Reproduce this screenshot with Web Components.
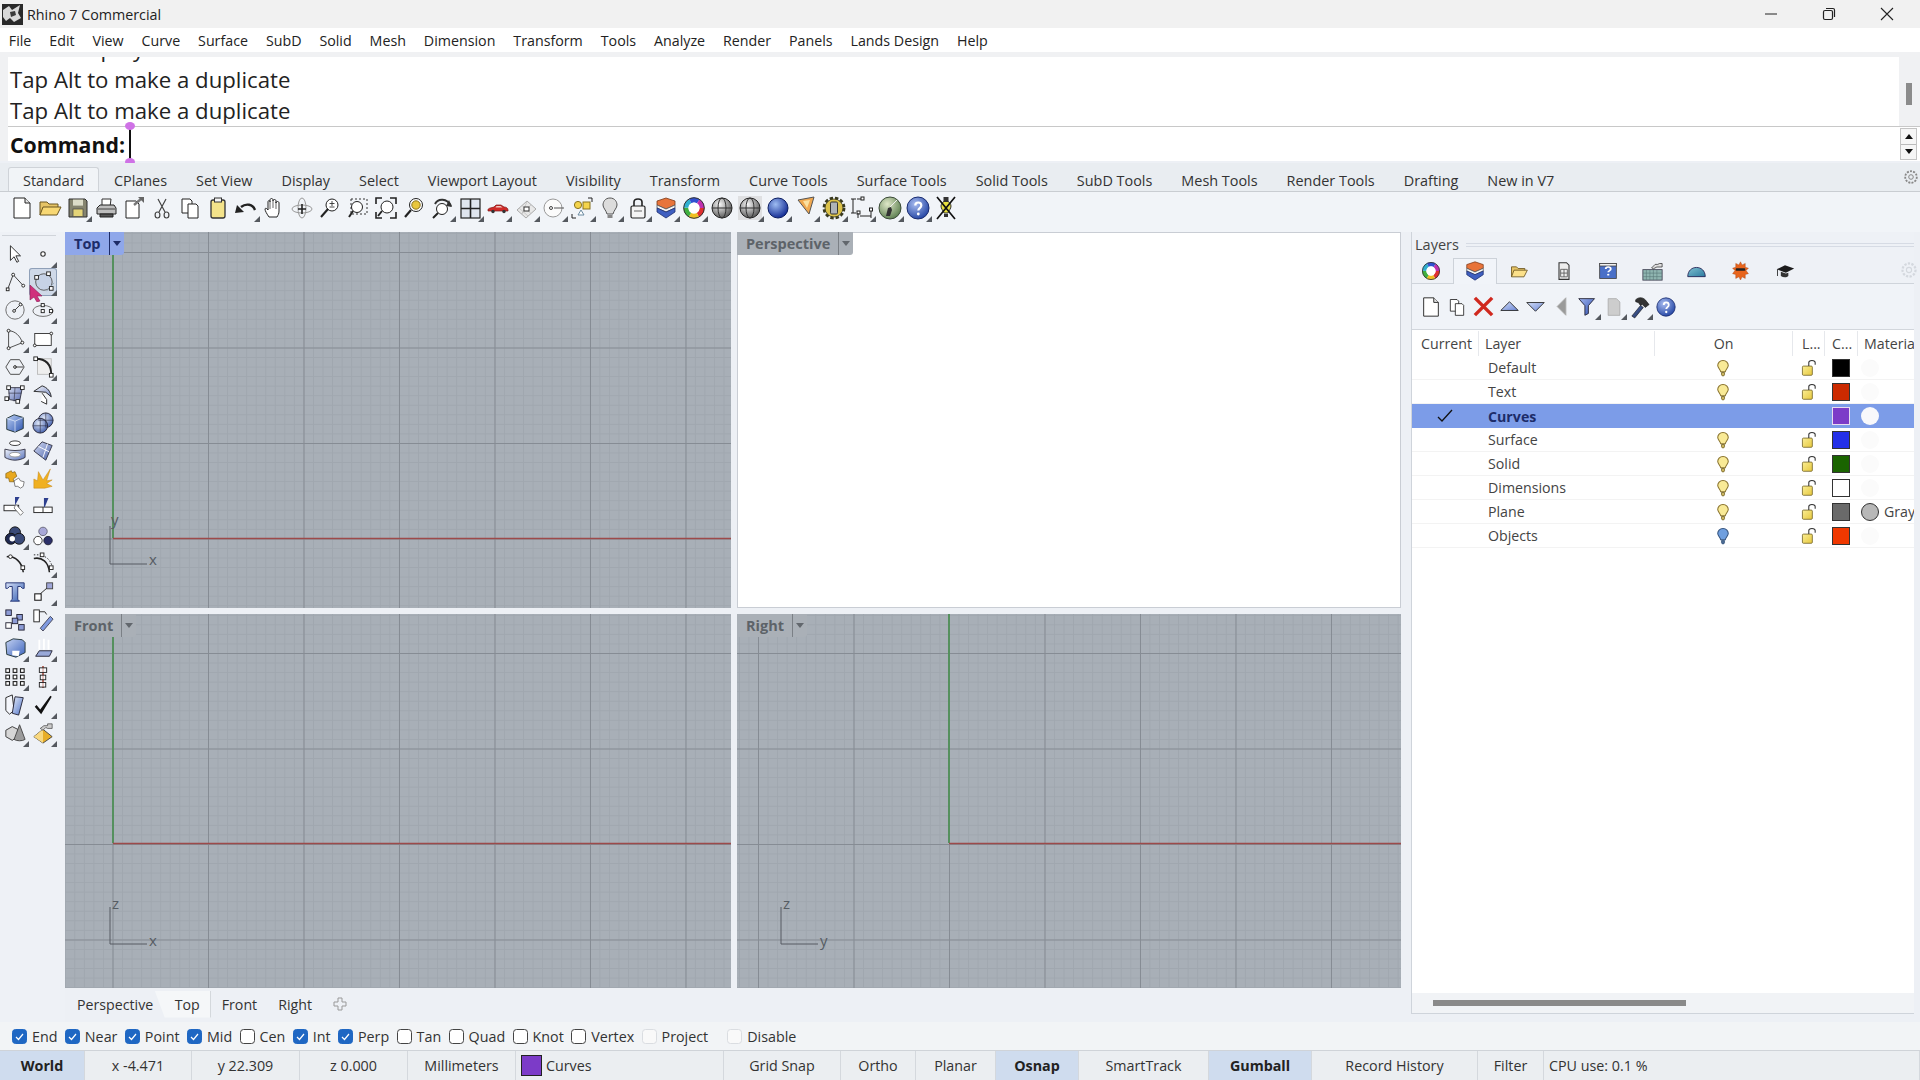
<![CDATA[<!DOCTYPE html>
<html lang="en"><head><meta charset="utf-8"><title>Rhino 7 Commercial</title>
<style>
html,body{margin:0;padding:0;width:1920px;height:1080px;overflow:hidden;background:#edf0f5;font-family:"Open Sans","Noto Sans",sans-serif;color:#333}
</style></head><body>
<rh-app></rh-app>
<script>
const G=(id,a,b)=>`<defs><linearGradient id="${id}" x1="0" y1="0" x2="1" y2="1"><stop offset="0" stop-color="${a}"/><stop offset="1" stop-color="${b}"/></linearGradient></defs>`;
const R=(id,a,b)=>`<defs><radialGradient id="${id}" cx=".38" cy=".32" r=".75"><stop offset="0" stop-color="${a}"/><stop offset="1" stop-color="${b}"/></radialGradient></defs>`;
const Q=`<path d="M9.3 9.5c0-4 6-4 6 0 0 2.6-3 2.6-3 5" fill="none" stroke="#fff" stroke-width="2.2"/><circle cx="12.3" cy="18" r="1.4" fill="#fff"/>`;
const WHEEL=`<circle cx="12" cy="12" r="8" fill="none" stroke="#e03030" stroke-width="5" stroke-dasharray="8.4 42"/><circle cx="12" cy="12" r="8" fill="none" stroke="#f0c020" stroke-width="5" stroke-dasharray="8.4 42" stroke-dashoffset="-8.4"/><circle cx="12" cy="12" r="8" fill="none" stroke="#40b040" stroke-width="5" stroke-dasharray="8.4 42" stroke-dashoffset="-16.8"/><circle cx="12" cy="12" r="8" fill="none" stroke="#30b0d0" stroke-width="5" stroke-dasharray="8.4 42" stroke-dashoffset="-25.2"/><circle cx="12" cy="12" r="8" fill="none" stroke="#3050d0" stroke-width="5" stroke-dasharray="8.4 42" stroke-dashoffset="-33.6"/><circle cx="12" cy="12" r="8" fill="none" stroke="#c030b0" stroke-width="5" stroke-dasharray="8.4 42" stroke-dashoffset="-42"/><circle cx="12" cy="12" r="10.3" fill="none" stroke="#333" stroke-width="1"/><circle cx="12" cy="12" r="5.6" fill="#fff"/>`;
const LAYERS=`<path d="M3 5l9-3 9 3v4l-9 4-9-4z" fill="#e8743a" stroke="#7a3a1a" stroke-width=".8"/><path d="M3 9l9 4 9-4v3l-9 4-9-4z" fill="#f4f4f4" stroke="#555" stroke-width=".8"/><path d="M3 12l9 4 9-4v4l-9 6-9-6z" fill="#3f5fc0" stroke="#1d2d6e" stroke-width=".8"/>`;
const I={
new:`<path d="M4 2h11l5 5v15H4z" fill="#fff" stroke="#222"/><path d="M15 2v5h5" fill="#e4e4e4" stroke="#222"/>`,
open:`<path d="M2 19V6h7l2 2h9v4" fill="#e6c466" stroke="#6b5620"/><path d="M2 19l3-8h18l-4 8z" fill="#f8d874" stroke="#6b5620"/>`,
save:`<path d="M3 3h16l2 2v16H3z" fill="#85846f" stroke="#2e2e2e"/><rect x="7" y="3.6" width="10" height="6" fill="#dcdcc8"/><rect x="7" y="13" width="10" height="7.6" fill="#e4d478" stroke="#444" stroke-width=".7"/>`,
print:`<path d="M8 3h9l-1 8H8z" fill="#fff" stroke="#333"/><path d="M3 12l3-3h14l2 3v6H3z" fill="#bdbdbd" stroke="#222"/><path d="M6 18h13v3H6z" fill="#555" stroke="#222"/><path d="M4 13h17" stroke="#444"/>`,
tmpl:`<path d="M4 5h10l3 3v14H4z" fill="#fff" stroke="#222"/><path d="M12 9l7-6" stroke="#777" stroke-width="2.4"/><path d="M16 1h6v6z" fill="#666"/>`,
cut:`<path d="M8 3l7 13M16 3L9 16" stroke="#444" stroke-width="1.2" fill="none"/><ellipse cx="7.5" cy="19" rx="2.4" ry="3" fill="none" stroke="#444" stroke-width="1.2"/><ellipse cx="16.5" cy="19" rx="2.4" ry="3" fill="none" stroke="#444" stroke-width="1.2"/>`,
copy:`<path d="M4 3h8l2 2v12H4z" fill="#fff" stroke="#222"/><path d="M10 8h8l2 2v12H10z" fill="#fff" stroke="#222"/>`,
paste:`<rect x="5" y="4" width="14" height="18" rx="2" fill="#f4e38a" stroke="#333" stroke-width="1.3"/><rect x="8.5" y="2" width="7" height="4" fill="#f5f5f5" stroke="#333"/>`,
undo:`<path d="M21 14c-2-6-9-7-14-3" fill="none" stroke="#222" stroke-width="2.4"/><path d="M3 9l7 7-9 1z" fill="#222"/>`,
hand:`<path d="M7 21c-2-3-4-6-4-8 0-1 2-1 3 1V6c0-2 2-2 2 0V4c0-2 3-2 3 0v1c0-2 3-2 3 0v2c0-2 3-2 3 0v8c0 3-1 4-2 6z" fill="#fff" stroke="#222" stroke-width="1"/><path d="M8 6v7M11 5v7M14 6v7" stroke="#222" stroke-width=".7"/>`,
rot:`<ellipse cx="12" cy="13" rx="10" ry="4" fill="none" stroke="#999"/><ellipse cx="12" cy="12" rx="4" ry="10" fill="none" stroke="#999"/><path d="M12 8v10M8 13h8" stroke="#222" stroke-width="1.6"/>`,
zoom:`<circle cx="14" cy="9" r="6" fill="#fff" stroke="#222"/><path d="M10 13l-7 8" stroke="#222" stroke-width="2"/><path d="M11.5 7.5h5M14 5v5M11.5 11h5" stroke="#333" stroke-width=".9"/>`,
zwin:`<circle cx="11" cy="11" r="5.5" fill="#fff" stroke="#222"/><path d="M7 15l-4 6" stroke="#222" stroke-width="2"/><rect x="5" y="3" width="16" height="15" fill="none" stroke="#333" stroke-dasharray="2 2"/>`,
zext:`<circle cx="13" cy="11" r="6" fill="#fff" stroke="#222"/><path d="M8 15l-4 5" stroke="#222" stroke-width="2"/><path d="M2 8V2h6M22 8V2h-6M2 16v6h6M22 16v6h-6" fill="none" stroke="#222" stroke-width="1.6"/>`,
zsel:`<circle cx="14" cy="9" r="6.5" fill="#fff" stroke="#222"/><circle cx="14" cy="9" r="4.2" fill="#e8c63c" stroke="#8a7420"/><path d="M9 14l-6 7" stroke="#222" stroke-width="2.2"/>`,
zund:`<circle cx="12" cy="13" r="5.5" fill="#fff" stroke="#222"/><path d="M8 17l-5 5" stroke="#222" stroke-width="2"/><path d="M5 8c3-6 12-6 16 2" fill="none" stroke="#333" stroke-width="2"/><path d="M19 4l3 7-6-1z" fill="#333"/>`,
four:`<rect x="3" y="3" width="19" height="19" fill="#dfe5ee" stroke="#222" stroke-width="1.2"/><path d="M12.5 3v19M3 12.5h19" stroke="#222" stroke-width="1.6"/>`,
car:`<path d="M2 14c0-2 3-2 6-3l2-2h5l3 2c2 0 4 1 4 3v1H2z" fill="#d02a28" stroke="#7a1514" stroke-width=".7"/><path d="M10.500 10h4l2 1.500h-7z" fill="#f0c8c0"/><circle cx="7" cy="15.500" r="1.700" fill="#333"/><circle cx="18" cy="15.500" r="1.700" fill="#333"/>`,
cpl:`<path d="M3 14L13 5l9 8-10 9z" fill="#e8e8e8" stroke="#aaa"/><path d="M8 9.5l9 8M13 5.5L8 18M5 12l9 8M17 9l-10 9" stroke="#bbb" stroke-width=".7"/><rect x="10" y="11" width="5" height="4" fill="#fff" stroke="#333"/>`,
named:`<circle cx="11" cy="12" r="9" fill="#fbfbfb" stroke="#999"/><circle cx="9" cy="12" r="1.5" fill="none" stroke="#444"/><path d="M12 12h10" stroke="#555"/>`,
sel:`<circle cx="8" cy="9" r="3.6" fill="#f4d44c" stroke="#8a7420"/><rect x="13" y="6" width="7" height="7" fill="#f4d44c" stroke="#8a7420"/><path d="M11 14l3 5H8z" fill="#fff" stroke="#6a8aa0"/><path d="M18 2h4v4M2 18v4h4" fill="none" stroke="#222"/>`,
bulbg:`<path d="M12 2c-5 0-7 4-7 7 0 3 3 5 4 9h6c1-4 4-6 4-9 0-3-2-7-7-7z" fill="#dcdcdc" stroke="#555"/><path d="M9.5 19h5v3h-5z" fill="#888"/>`,
lock:`<rect x="5" y="10" width="14" height="12" rx="1.5" fill="#f4f4f4" stroke="#222" stroke-width="1.2"/><path d="M8 10V6c0-4 8-4 8 0v4" fill="none" stroke="#222" stroke-width="1.6"/><path d="M8 15h8" stroke="#666"/>`,
layers:LAYERS,
wheel:WHEEL,
sphw:R('a','#f8f8f8','#4d4d4d')+`<circle cx="12" cy="12" r="10" fill="url(#a)" stroke="#222"/><ellipse cx="12" cy="12" rx="4" ry="10" fill="none" stroke="#333"/><path d="M2 12h20" stroke="#333"/>`,
sphs:`<rect x="0" y="0" width="24" height="24" fill="#dfe0e2"/>`+R('a','#f8f8f8','#4d4d4d')+`<circle cx="12" cy="12" r="10" fill="url(#a)" stroke="#222"/><ellipse cx="12" cy="12" rx="4" ry="10" fill="none" stroke="#333"/><path d="M2 12h20" stroke="#333"/>`,
sphb:R('a','#9dbcf2','#08208c')+`<circle cx="12" cy="12" r="10" fill="url(#a)" stroke="#0a1c60"/>`,
cone:`<path d="M4 4l16-3-5 17z" fill="#f0a850" stroke="#555"/><path d="M9 5l7-1-3 8z" fill="#fbe0a0"/>`,
gear:`<circle cx="12" cy="12" r="9.600" fill="none" stroke="#3a3a20" stroke-width="3.600" stroke-dasharray="3.200 1.900"/><circle cx="12" cy="12" r="9" fill="#dcc24a" stroke="#3a3a20" stroke-width=".8"/><rect x="8.500" y="6" width="7" height="12" rx="1.200" fill="#aeb3b8" stroke="#333"/>`,
dim:`<path d="M3 3v14M1 3h5M1 17h5" stroke="#222" fill="none"/><path d="M7 3h5" stroke="#222"/><rect x="11" y="1" width="3" height="3" fill="#fff" stroke="#222"/><rect x="7" y="15" width="3" height="3" fill="#fff" stroke="#222"/><path d="M8 17v5M21 14v8M10 20h11" stroke="#222"/><rect x="19.5" y="12" width="3" height="3" fill="#fff" stroke="#222"/>`,
green:R('a','#dfe8c8','#567a4a')+`<circle cx="12" cy="12" r="11" fill="url(#a)" stroke="#3a4a38"/><path d="M8 20l2-8 3-1 1 3-2 6z" fill="#333"/><path d="M12 11l7-7" stroke="#eee"/>`,
help:R('a','#a8bcf0','#1d3fa0')+`<circle cx="12" cy="12" r="11" fill="url(#a)" stroke="#1a2c70"/>`+Q,
xbulb:`<path d="M12 5c-3 0-5 3-5 5 0 3 2 4 3 7h4c1-3 3-4 3-7 0-2-2-5-5-5z" fill="#e8e040" stroke="#333"/><rect x="9.5" y="1" width="5" height="5" fill="#333"/><path d="M3 1l18 22M21 1L3 23" stroke="#111" stroke-width="1.7"/><path d="M10 18h4v3h-4z" fill="#333"/>`,
arrow:`<path d="M7 3v16l4-4 3 6 2-1-3-6h5z" fill="#fff" stroke="#222"/>`,
point:`<circle cx="12" cy="12" r="2.4" fill="#fff" stroke="#333" stroke-width="1.2"/>`,
poly:`<path d="M4 20L10 4l11 12" fill="none" stroke="#333"/><rect x="2.5" y="18.5" width="3" height="3" fill="#fff" stroke="#222"/><circle cx="10" cy="4" r="1.6" fill="#fff" stroke="#222"/><circle cx="21" cy="16" r="1.6" fill="#fff" stroke="#222"/>`,
freec:`<circle cx="13" cy="12" r="9" fill="#c6d2e6" stroke="#555"/><path d="M16 22L24 13" stroke="#9ab"/><rect x="3" y="5" width="4" height="4" fill="#fff" stroke="#222"/><rect x="16" y="1" width="4" height="4" fill="#fff" stroke="#222"/><rect x="19" y="17" width="4" height="4" fill="#fff" stroke="#222"/>`,
circ:`<circle cx="12" cy="12" r="10" fill="none" stroke="#666"/><path d="M11 13l7-7" stroke="#333"/><circle cx="11" cy="13" r="1.5" fill="#fff" stroke="#222"/><circle cx="18" cy="6" r="1.5" fill="#fff" stroke="#222"/>`,
ell:`<ellipse cx="12" cy="13" rx="11" ry="6" fill="none" stroke="#666"/><rect x="10" y="5" width="3.4" height="3.4" fill="#fff" stroke="#222"/><rect x="10" y="11.5" width="3.4" height="3.4" fill="#fff" stroke="#222"/><rect x="19" y="11.5" width="3.4" height="3.4" fill="#fff" stroke="#222"/>`,
arc:`<path d="M5 3c7 0 13 6 15 13L5 22z" fill="none" stroke="#444"/><circle cx="5" cy="3" r="1.6" fill="#fff" stroke="#222"/><circle cx="20" cy="16" r="1.6" fill="#fff" stroke="#222"/><circle cx="5" cy="22" r="1.6" fill="#fff" stroke="#222"/>`,
rect:`<rect x="3" y="6" width="18" height="13" fill="#fff" stroke="#333"/><circle cx="3" cy="19" r="1.5" fill="#fff" stroke="#222"/><circle cx="21" cy="6" r="1.5" fill="#fff" stroke="#222"/>`,
hex:`<path d="M7 4h10l5 8-5 8H7L2 12z" fill="none" stroke="#444"/><circle cx="12" cy="12" r="1.5" fill="#fff" stroke="#222"/><path d="M12 12h9" stroke="#333"/>`,
fillet:`<rect x="6" y="3" width="15" height="17" fill="#eee" stroke="#bbb"/><path d="M4 3c10 0 17 4 17 18" fill="none" stroke="#222" stroke-width="2"/><rect x="2" y="1" width="4" height="4" fill="#fff" stroke="#222"/><rect x="19" y="19" width="4" height="4" fill="#fff" stroke="#222"/>`,
srf:G('a','#d0d8f0','#5a6cb0')+`<path d="M5 4h15l-3 15-11-2z" fill="url(#a)" stroke="#334"/><path d="M12 4l-1 15M5 10h14" stroke="#334" stroke-width=".7"/><rect x="3" y="2" width="4" height="4" fill="#fff" stroke="#222"/><rect x="18" y="2" width="4" height="4" fill="#fff" stroke="#222"/><rect x="1" y="14" width="4" height="4" fill="#fff" stroke="#222"/><rect x="13" y="17" width="4" height="4" fill="#fff" stroke="#222"/>`,
srf2:G('a','#f4f6fb','#7b8dc6')+`<path d="M2 8l9-6c6 2 9 6 10 12l-6-5z" fill="url(#a)" stroke="#222"/><path d="M11 10l5 7v5l-6-3" fill="#fff" stroke="#222"/>`,
box:G('a','#bcd0f4','#2e55b0')+`<path d="M3 7l8-4 10 3v12l-9 4-9-3z" fill="url(#a)" stroke="#233"/><path d="M3 7l9 3 9-4M12 10v12" stroke="#e4ecfa" stroke-width=".8" fill="none"/>`,
sph2:R('a','#dde6f7','#3d5aa8')+`<circle cx="15" cy="9" r="8" fill="url(#a)" stroke="#223"/><circle cx="9" cy="15" r="8" fill="url(#a)" stroke="#223"/><path d="M1 15h16M9 7v16M7 9h16M15 1v16" stroke="#223" stroke-width=".6"/>`,
ext:G('a','#f0f4fc','#5a74bc')+`<ellipse cx="12" cy="3.5" rx="6" ry="2.5" fill="#fff" stroke="#333"/><path d="M1 10c7 2 15 2 22 0v9c-7 4-15 4-22 0z" fill="url(#a)" stroke="#334"/><ellipse cx="12" cy="16" rx="6" ry="2.5" fill="#fff" stroke="#999"/>`,
srf3:G('a','#d4dcf3','#4b62ab')+`<path d="M2 12L11 2l11 4-7 16z" fill="url(#a)" stroke="#334"/><path d="M7 7l12 6M12 19L17 4" stroke="#fff" stroke-width="1"/>`,
puzzle:`<path d="M2 6l6-3 1 2 3-1 2 5-4 3 1 3-5 0-1-4-3 0z" fill="#e8a81e" stroke="#7a5a10" stroke-width=".7"/><path d="M11 14l5-3 2 3 4 1-1 5-3 2-3-2-3 0z" fill="#fff" stroke="#444" stroke-width=".7"/>`,
expl:`<path d="M2 22V12l4 2 1-10 5 9 8-12-4 13 6-1-6 4 6 3-8 2z" fill="#f0b020" stroke="#c08010" stroke-width=".5"/>`,
trim:`<rect x="0" y="9" width="16" height="6" fill="#fff" stroke="#222"/><path d="M13 8l8 9-3 3-7-8z" fill="#fff" stroke="#777"/><path d="M12 0h5l-5 9z" fill="#2d3f8e"/>`,
split:`<rect x="2" y="11" width="20" height="6" fill="#fff" stroke="#222"/><path d="M12 17V11" stroke="#222"/><path d="M13 1h5l-4 10h-1z" fill="#2d3f8e"/>`,
bool:`<circle cx="12" cy="8" r="6" fill="#3a4a78" stroke="#111"/><circle cx="7.5" cy="15" r="6" fill="#1e2850" stroke="#111"/><circle cx="16.5" cy="15" r="6" fill="#3a4a78" stroke="#111"/><circle cx="9" cy="15" r="3" fill="#fff"/>`,
cir3:`<circle cx="12" cy="7" r="4.6" fill="#a8a8d8" stroke="#667"/><circle cx="6.5" cy="17" r="4.6" fill="#fff" stroke="#333"/><circle cx="17.5" cy="17" r="4.6" fill="#2a2f68" stroke="#223"/>`,
crv:`<path d="M3 4c9-1 17 6 18 17" fill="none" stroke="#222" stroke-width="1.7"/><circle cx="7" cy="4" r="2" fill="#fff" stroke="#222"/><rect x="18.5" y="14" width="4" height="4" fill="#fff" stroke="#222"/>`,
arcd:`<path d="M2 6c9-2 16 4 17 15" fill="none" stroke="#222" stroke-width="1.7"/><path d="M2 2h8M14 4c4 2 7 6 8 11" fill="none" stroke="#222" stroke-dasharray="1.6 1.8"/><rect x="9" y="0" width="4" height="4" fill="#fff" stroke="#222"/><rect x="19" y="14" width="4" height="4" fill="#fff" stroke="#222"/>`,
tee:G('a','#d8e2f8','#2f5ab0')+`<path d="M2 2h20v6h-2l-2-2h-3v14l2 2H7l2-2V6H6L4 8H2z" fill="url(#a)" stroke="#1d2d6e"/>`,
scale:`<rect x="3" y="14" width="7" height="7" fill="#fff" stroke="#222" stroke-width="1.2"/><rect x="16" y="2" width="6.5" height="6.5" fill="#9fa6d8" stroke="#444"/><path d="M9 14l7-6" stroke="#222"/>`,
group:`<rect x="2" y="1" width="6" height="6" fill="#8d9cd6" stroke="#223"/><rect x="14" y="6" width="6" height="6" fill="#8d9cd6" stroke="#223"/><rect x="9" y="10" width="6" height="6" fill="#8d9cd6" stroke="#223"/><rect x="2" y="15" width="6" height="6" fill="#fff" stroke="#223"/><rect x="16" y="17" width="6" height="6" fill="#8d9cd6" stroke="#223"/>`,
mirror:`<rect x="2" y="1" width="6" height="13" fill="#fff" stroke="#222"/><path d="M8 3h6l2 3" fill="none" stroke="#222"/><path d="M9 21L20 8l3 3-11 13z" fill="#7f9ae0" stroke="#445"/>`,
box2:G('a','#c4d2f2','#3c63bc')+`<path d="M2 6l8-4 10 1 3 3v11l-10 5-10-3z" fill="url(#a)" stroke="#233"/><path d="M9 15h8l-1 6-7-1z" fill="#fff"/>`,
pull:`<path d="M4 21l4-6h14l-3 6z" fill="#98a8d8" stroke="#223"/><path d="M8 14V3M13 14V2M18 14V3" stroke="#fff" stroke-width="2"/>`,
arr:`<g fill="#fff" stroke="#222" stroke-width="1.2"><rect x="2" y="3" width="4" height="4"/><rect x="10" y="3" width="4" height="4"/><rect x="18" y="3" width="4" height="4"/><rect x="2" y="10" width="4" height="4"/><rect x="10" y="10" width="4" height="4"/><rect x="18" y="10" width="4" height="4"/><rect x="2" y="17" width="4" height="4"/><rect x="10" y="17" width="4" height="4"/><rect x="18" y="17" width="4" height="4"/></g>`,
dots:`<path d="M12 0v24" stroke="#a03020" stroke-width="1.5"/><g fill="#fff" stroke="#222" fill-opacity=".6"><rect x="8" y="2" width="8" height="5"/><rect x="9" y="10" width="6" height="5"/><rect x="8" y="18" width="7" height="5"/></g>`,
poly2:G('a','#e8eef9','#4d72c8')+`<path d="M2 4l7-3 2 17-5 4-4-4z" fill="#f4f6fb" stroke="#222"/><path d="M12 3l9 1-5 19-7-2z" fill="url(#a)" stroke="#223"/>`,
check:`<path d="M3 14l2-2 4 5L20 2l1.500 1L10 22z" fill="#111"/>`,
solids:`<path d="M2 9l7-4 6 3v8l-6 4-7-4z" fill="#d6d6d6" stroke="#333"/><path d="M17 3l6 16c-3 2-9 2-12 0z" fill="#9c9c9c" stroke="#444"/>`,
pyr:`<path d="M12 8l10 8-10 7-10-7z" fill="#e8ae28" stroke="#444"/><path d="M12 8l-10 8 10 7z" fill="#f8d880"/><path d="M9 7l4-3h4v-2h5v5h-5l-2-1-3 3z" fill="#ccc" stroke="#333" stroke-width=".7"/>`,
folder:`<path d="M3 19V7h6l2 2h8v3" fill="#e6c466" stroke="#6b5620"/><path d="M3 19l3-8h16l-4 8z" fill="#fbe08a" stroke="#6b5620"/>`,
docg:`<path d="M6 2h9l3 3v17H6z" fill="#eee" stroke="#333" stroke-width="1.3"/><path d="M8 10h8v9H8zM12 10v9M8 14.5h8" fill="none" stroke="#555"/>`,
hwin:`<rect x="2" y="3" width="20" height="18" fill="#4a70c8" stroke="#444"/><rect x="2" y="3" width="20" height="3" fill="#f2f2f2" stroke="#444"/><g transform="translate(0 2) scale(1 .8)">`+Q+`</g>`,
keys:`<rect x="1" y="11" width="22" height="12" fill="#8fb5b0" stroke="#445"/><path d="M1 15h22M1 19h22M5 11v12M9 11v12M13 11v12M17 11v12" stroke="#5a7a7a" stroke-width=".7"/><path d="M11 9l4-4h3l2-1h3v4h-6l-4 2z" fill="#ddd" stroke="#222" stroke-width=".8"/>`,
dome:G('a','#7fc0d0','#2c7aa0')+`<path d="M2 19C2 5 22 5 22 19z" fill="url(#a)" stroke="#225"/>`,
sun:`<path d="M12 1l2 4 4-2 0 5 4 1-3 3 3 4-4 1 0 5-4-2-2 4-2-4-4 2 0-5-4-1 3-4-3-3 4-1 0-5 4 2z" fill="#e8641c" stroke="#a04010" stroke-width=".5"/><rect x="6" y="9" width="12" height="3.4" rx="1" fill="#222"/>`,
cap:`<path d="M2 10l10-5 11 4-10 5z" fill="#1c1c1c"/><path d="M7 13v5c3 2 7 2 9 0v-4l-3 1z" fill="#333"/><path d="M3 10v8" stroke="#222"/>`,
x:`<path d="M3 3l18 18M21 3L3 21" stroke="#d0281e" stroke-width="3.6"/>`,
up:G('a','#d4def6','#6a86d8')+`<path d="M12 6l11 11H1z" fill="url(#a)" stroke="#222" stroke-width="1.1"/>`,
down:G('a','#d4def6','#6a86d8')+`<path d="M12 18L23 7H1z" fill="url(#a)" stroke="#222" stroke-width="1.1"/>`,
left:`<path d="M17 2v20L7 12z" fill="#9a9a9a" stroke="#aaa"/>`,
funnel:G('a','#9fb4ee','#2f4fb0')+`<path d="M2 3h18l-7 8v9l-4 2V11z" fill="url(#a)" stroke="#223"/>`,
docgr:`<path d="M5 2h10l4 4v16H5z" fill="#cdcdcd" stroke="#aaa"/>`,
hammer:G('a','#5a76b8','#152550')+`<path d="M4 22l9-11 3 2-9 11z" fill="url(#a)" stroke="#111" stroke-width=".6"/><path d="M8 5c3-3 7-3 10 0l4 5-4 3-3-3-2 1-2-3-3-1z" fill="#333" stroke="#111" stroke-width=".6"/>`,
bulb:`<path d="M12 2c-4.600 0-7 3.600-7 6.600 0 3 3 5 4 8.400h6c1-3.400 4-5.400 4-8.400C19 5.600 16.600 2 12 2z" fill="#f9ea96" stroke="#8a7430" stroke-width="1.400"/><path d="M10 18h4v3l-1 1.500h-2L10 21z" fill="#c9b35c" stroke="#6e5e22"/>`,
bulbb:`<path d="M12 2c-4.600 0-7 3.600-7 6.600 0 3 3 5 4 8.400h6c1-3.400 4-5.400 4-8.400C19 5.600 16.600 2 12 2z" fill="#6f9fdf" stroke="#37557e" stroke-width="1.400"/><path d="M10 18h4v3l-1 1.500h-2L10 21z" fill="#4a6a92" stroke="#37557e"/>`,
ulock:G('a','#fbee94','#e6c83e')+`<rect x="2" y="10" width="14" height="13" rx="1.500" fill="url(#a)" stroke="#6e5e22" stroke-width="1.100"/><path d="M11 10V5c0-4 9-4 9 0v3" fill="none" stroke="#333" stroke-width="1.500"/>`
};
function def(tag,css,html,init){
  customElements.define(tag,class extends HTMLElement{
    constructor(){super();this.attachShadow({mode:'open'})}
    connectedCallback(){
      if(this._d)return;this._d=1;
      const h=typeof html==='function'?html(this):html;
      this.shadowRoot.innerHTML=`<style>${css}</style>${h}`;
      if(init)init(this);
    }
  });
}
def('rh-icon',`:host{display:inline-flex;position:relative;align-items:center;justify-content:center;box-sizing:border-box;width:var(--w,28px);height:var(--h,28px)}
svg{display:block;overflow:visible}
:host([fly])::after{content:"";position:absolute;right:0;bottom:0;border-style:solid;border-width:0 0 6px 6px;border-color:transparent transparent #55595f transparent}
:host([hot]){background:#cfd9e8;box-shadow:inset 0 0 0 1px #8fa0b8;border-radius:3px}`,
 e=>{const s=+(e.getAttribute('s')||24);return `<svg width="${s}" height="${s}" viewBox="0 0 24 24" aria-hidden="true">${I[e.getAttribute('n')]||''}</svg>`});

def('rh-titlebar',`:host{display:flex;align-items:center;height:28px;background:#f1f1f1;font-size:14.300px;color:#222;overflow:hidden}
.logo{width:21px;height:21px;margin:0 4px 0 2px;flex:none}
.t{flex:1}
.c{display:flex;width:58px;justify-content:center}`,
`<svg class="logo" viewBox="0 0 21 21"><rect width="21" height="21" fill="#2a2a2a"/><path d="M1 6l6-4 3 4 8-5-2 8 3 5-7 4-4-4-4 3-3-4z" fill="#d9d9d9"/><path d="M8 8l5-1 1 4-5 2z" fill="#3a3a3a"/></svg>
<span class="t">Rhino 7 Commercial</span>
<span class="c"><svg width="14" height="14" viewBox="0 0 14 14"><path d="M1 7h12" stroke="#222"/></svg></span>
<span class="c"><svg width="14" height="14" viewBox="0 0 14 14"><rect x="1.500" y="3.500" width="9" height="9" rx="1.500" fill="none" stroke="#222" stroke-width="1.200"/><path d="M4 1.500h7c1 0 1.500 .5 1.500 1.500v7" fill="none" stroke="#222" stroke-width="1.200"/></svg></span>
<span class="c" style="margin-right:4px"><svg width="14" height="14" viewBox="0 0 14 14"><path d="M1 1l12 12M13 1L1 13" stroke="#222" stroke-width="1.100"/></svg></span>`);

def('rh-menubar',`:host{display:flex;align-items:center;gap:17.900px;height:24px;background:#fff;padding-left:8.800px;font-size:14.250px;color:#222}`,`<slot></slot>`);

def('rh-cmd',`:host{display:block;position:relative;background:#f0f1f3;padding:5px 0 0 8px;height:109px;box-sizing:border-box}
.hist{display:flex;height:69px;overflow:hidden;background:#fff;margin-right:21px}
.lines{align-self:flex-end;padding-left:2px;font-size:22.200px;line-height:31px;color:#222;white-space:nowrap}
.sb{position:absolute;right:8px;top:31px;width:6px;height:22px;background:#8b8b8b}
.cmd{display:flex;align-items:center;height:34px;background:#fff;border-top:1px solid #c8c8c8;position:relative;padding-left:2px;font-size:21.300px;font-weight:700;color:#111}
.caret{position:absolute;left:121px;top:-2px;width:2px;height:37px;background:#111}
.caret::before,.caret::after{content:"";position:absolute;left:-4px;width:10px;height:8px;border-radius:50%;background:#cf72e6}
.caret::before{top:-3px}.caret::after{bottom:-4px}
.spin{position:absolute;right:3px;top:1px;width:17px;height:32px;display:flex;flex-direction:column;border:1px solid #c4c4c4;box-sizing:border-box;background:#f6f6f6}
.spin span{flex:1;display:flex;align-items:center;justify-content:center}
.spin span+span{border-top:1px solid #bbb}
.spin i{display:block;border-left:4px solid transparent;border-right:4px solid transparent}
.u{border-bottom:5px solid #111}.d{border-top:5px solid #111}`,
`<div class="hist"><div class="lines"><div>1 closed polysurface added to selection.</div><div>Tap Alt to make a duplicate</div><div>Tap Alt to make a duplicate</div></div></div>
<div class="sb"></div>
<div class="cmd">Command:<div class="caret"></div><div class="spin"><span><i class="u"></i></span><span><i class="d"></i></span></div></div>`);

def('rh-tabs',`:host{display:flex;align-items:flex-end;height:29px;margin-top:2px;background:#e9edf1;border-bottom:1px solid #c9cdd2;box-sizing:border-box;padding-left:8px;font-size:14.420px;color:#333;position:relative}
.g{margin-left:auto;margin-right:1px;align-self:center}`,
`<slot></slot><svg class="g" width="16" height="16" viewBox="0 0 16 16"><circle cx="8" cy="8" r="5.800" fill="none" stroke="#888" stroke-width="1.800" stroke-dasharray="2 1.200"/><circle cx="8" cy="8" r="2.300" fill="none" stroke="#888"/></svg>`);
def('rh-tab',`:host{display:flex;align-items:center;height:24px;padding:3px 14.500px 0;box-sizing:border-box;white-space:nowrap}
:host([active]){background:#f1f4f7;border:1px solid #cfd3d8;border-bottom:0;border-radius:3px 3px 0 0;padding:2px 14px 0}`,`<slot></slot>`);

def('rh-toolbar',`:host{display:flex;align-items:center;height:40px;background:#f1f4f8;padding:0 0 8px 8px;box-sizing:border-box}`,`<slot></slot>`);
def('rh-sidebar',`:host{display:grid;grid-template-columns:28px 28px;grid-auto-rows:28.180px;width:65px;flex:none;box-sizing:border-box;padding:8px 0 0 1px;position:relative;align-content:start;background:#eef1f6}
.line{position:absolute;left:2px;right:9px;top:3px;height:1px;background:#d0d4da}
.cur{position:absolute;left:29px;top:53px}`,
`<div class="line"></div><slot></slot><svg class="cur" width="13" height="17" viewBox="0 0 13 17"><path d="M1 0v15l4-3 3 5 3-1-3-5h5z" fill="#d0307c" stroke="#8a2055" stroke-width=".6"/></svg>`);

def('rh-viewport',`:host{display:block;position:relative;overflow:hidden;background-color:#a8afb7;
background-image:linear-gradient(to right,#868c94 1px,transparent 1px),linear-gradient(to bottom,#868c94 1px,transparent 1px),linear-gradient(to right,#a0a7af 1px,transparent 1px),linear-gradient(to bottom,#a0a7af 1px,transparent 1px);
background-size:95.500px 100%,100% 95.500px,9.550px 100%,100% 9.550px;
background-position:var(--ox,0) 0,0 var(--oy,0),var(--ox,0) 0,0 var(--oy,0)}
:host([blank]){background:#fff;outline:1px solid #c9cdd4;outline-offset:-1px}
::slotted(svg){position:absolute;left:0;top:0;width:100%;height:100%;font:15px "Open Sans",sans-serif;fill:#565c63}
.lab{position:absolute;left:0;top:0;display:flex;align-items:center;height:23px;background:#aab0b7;font-size:14.500px;font-weight:700;color:#5d6369;padding-left:9px;border-radius:0 0 3px 0}
.lab i{display:block;width:1px;height:23px;background:#7b8086;margin-left:8px}
.lab b{display:block;margin:0 3px 0 3px;border-left:4.500px solid transparent;border-right:4.500px solid transparent;border-top:5px solid #62676d}
:host([active]) .lab{background:#8fa7ea;color:#1d2c68}
:host([active]) .lab i{background:#1d2c68}
:host([active]) .lab b{border-top-color:#1d2c68}`,
 e=>`<slot></slot><div class="lab"><span>${e.getAttribute('label')}</span><i></i><b></b></div>`);

def('rh-vtabs',`:host{display:flex;align-items:center;height:34px;box-sizing:border-box;padding:0 0 2px 1.500px;font-size:14.200px;color:#333}`,`<slot></slot>`);
def('rh-vtab',`:host{display:flex;align-items:center;height:27px;padding:0 10.500px;position:relative}
:host([active]){background:#f5f7f9;clip-path:polygon(0 0,100% 0,100% 100%,10px 100%);padding-left:20px;margin-left:-9px;border-right:1px solid #d4d8dc}`,`<slot></slot>`);

def('rh-panel',`:host{display:flex;flex-direction:column;width:503px;margin-left:10px;height:782px;box-sizing:border-box;background:#eef1f6;border:1px solid #cfd4db;border-width:0 0 1px 1px;position:relative;font-size:14.500px;color:#333}
.head{display:flex;align-items:center;gap:7px;height:25px;padding-left:3px;color:#444}
.head i{flex:1;height:2px;border-top:1px solid #d6dbe4;border-bottom:1px solid #d6dbe4}
.tabs{display:flex;height:26px;align-items:center;position:relative;z-index:1;margin-left:-3px}
.tabs rh-icon{--w:44.200px;--h:26px;margin-top:1px}
.tabs rh-icon[active]{background:#f1f4f9;border:1px solid #cdd2d9;border-bottom:0}
.g{margin-left:auto;margin-right:-4px}
.body{flex:1;display:flex;flex-direction:column;border-top:1px solid #cfd4db}
.tools{display:flex;align-items:center;height:45px;padding-left:6px;background:#f0f3f8;border-bottom:1px solid #d2d6dc}
.tools rh-icon{--w:26.100px;--h:26px}
.tbl{flex:1;background:#fff;overflow:hidden}
.scr{height:20px;background:#f1f3f6;display:flex;align-items:center;padding-left:21px}
.scr i{display:block;width:253px;height:6px;background:#8a8a8a}`,
`<div class="head"><span>Layers</span><i></i></div>
<div class="tabs">
<rh-icon n="wheel" s="20"></rh-icon><rh-icon n="layers" s="22" active></rh-icon><rh-icon n="folder" s="20"></rh-icon><rh-icon n="docg" s="20"></rh-icon><rh-icon n="hwin" s="20"></rh-icon><rh-icon n="keys" s="21"></rh-icon><rh-icon n="dome" s="21"></rh-icon><rh-icon n="sun" s="19"></rh-icon><rh-icon n="cap" s="20"></rh-icon>
<svg class="g" width="18" height="18" viewBox="0 0 16 16"><circle cx="8" cy="8" r="5.800" fill="none" stroke="#d4d8de" stroke-width="2" stroke-dasharray="2 1.200"/><circle cx="8" cy="8" r="2.300" fill="none" stroke="#d4d8de"/></svg>
</div>
<div class="body">
<div class="tools"><rh-icon n="new" s="22"></rh-icon><rh-icon n="copy" s="20"></rh-icon><rh-icon n="x" s="23"></rh-icon><rh-icon n="up" s="19"></rh-icon><rh-icon n="down" s="19"></rh-icon><rh-icon n="left" s="21"></rh-icon><rh-icon n="funnel" s="21" fly></rh-icon><rh-icon n="docgr" s="20" fly></rh-icon><rh-icon n="hammer" s="23" fly></rh-icon><rh-icon n="help" s="20"></rh-icon></div>
<div class="tbl"><slot></slot></div>
<div class="scr"><i></i></div>
</div>`);
const COLS='grid-template-columns:66px 176px 138px 32px 33px 57px;';
def('rh-thead',`:host{display:grid;${COLS}height:26px;align-items:center;white-space:nowrap;overflow:hidden;font-size:14.200px;color:#444;background:#fff}
span{display:flex;align-items:center;height:25px;padding-left:6px;overflow:hidden;box-sizing:border-box}
span+span{border-left:1px solid #e6e8ec}
.c{justify-content:center;padding:0}`,
`<span style="padding-left:9px">Current</span><span>Layer</span><span class="c">On</span><span style="padding-left:9px">L...</span><span style="padding-left:7px">C...</span><span>Materia</span>`);
def('rh-layer',`:host{display:grid;${COLS}height:24px;align-items:center;white-space:nowrap;overflow:hidden;font-size:14.200px;color:#444;background:#fff;border-bottom:1px solid #f3f3f3;box-sizing:border-box}
:host([cur]){background:#7c9ce8;border-bottom:0;color:#1d2c68;font-weight:700}
.n{padding-left:10px}.ck{display:flex;justify-content:center}
.on,.lk{display:flex;justify-content:center}
.lk{padding-left:2px}
.sw{width:18px;height:18px;margin-left:8px;box-sizing:border-box;border:1px solid #333}
:host([cur]) .sw{border-color:#e8dcf0}
.m{display:flex;align-items:center;gap:5px;padding-left:4px;font-weight:400;overflow:hidden}
.m i{display:block;width:18px;height:18px;border-radius:50%;box-sizing:border-box;flex:none}`,
 e=>{const cur=e.hasAttribute('cur');const m=e.getAttribute('mat');const b=e.getAttribute('bulb')||'bulb';
 return `<span class="ck">${cur?`<svg width="18" height="14" viewBox="0 0 18 14"><path d="M2 8l4 4L16 1" fill="none" stroke="#111" stroke-width="1.300"/></svg>`:''}</span>
 <span class="n">${e.getAttribute('name')}</span>
 <span class="on">${cur?'':`<rh-icon n="${b}" s="18" style="--w:18px;--h:20px"></rh-icon>`}</span>
 <span class="lk">${cur?'':`<rh-icon n="ulock" s="17" style="--w:19px;--h:20px"></rh-icon>`}</span>
 <span class="sw" style="background:${e.getAttribute('c')}"></span>
 <span class="m">${cur?'<i style="background:#f8f8fb"></i>':m?`<i style="background:#b8b8b8;border:1px solid #333"></i><span>${m}</span>`:'<i style="background:#fbfbfb"></i>'}</span>`});

def('rh-snaps',`:host{display:flex;align-items:center;height:28px;background:#f2f4f6;padding-left:12px;font-size:14.300px;color:#333;box-sizing:border-box}`,`<slot></slot>`);
def('rh-check',`:host{display:flex;align-items:center;gap:5px;white-space:nowrap;margin-right:var(--m,7.400px)}
i{display:flex;align-items:center;justify-content:center;width:15px;height:15px;box-sizing:border-box;border-radius:3.500px;background:#fff;border:1px solid #444}
:host([on]) i{background:#1f67c3;border-color:#1f67c3}
:host([dim]) i{border-color:#dadde1;background:#f9f9f9}
svg{display:block}`,
 e=>`<i>${e.hasAttribute('on')?'<svg width="11" height="11" viewBox="0 0 11 11"><path d="M2 6l2.500 2.500L9 3" fill="none" stroke="#fff" stroke-width="1.200"/></svg>':''}</i><slot></slot>`);

def('rh-status',`:host{display:grid;grid-template-columns:85px 107px 108px 108px 108px 208px 117px 75px 80px 83px 130px 103px 166px 66px 1fr;height:30px;background:#ebeef1;border-top:1px solid #cfd3d8;box-sizing:border-box;font-size:14.300px;color:#333}`,`<slot></slot>`);
def('rh-cell',`:host{display:flex;align-items:center;justify-content:center;gap:4px;white-space:nowrap;border-right:1px solid #d4d8dd;overflow:hidden;box-sizing:border-box}
:host([on]){background:#cfdcee;font-weight:700;color:#222}
:host([left]){justify-content:flex-start;padding-left:5px}
i{display:block}`,
 e=>{const c=e.getAttribute('sw');return (c?`<i style="width:21px;height:21px;box-sizing:border-box;background:${c};border:1px solid #222"></i>`:'')+'<slot></slot>'});

def('rh-app',`:host{display:flex;flex-direction:column;width:1920px;height:1080px;overflow:hidden}
.main{display:flex;height:790px;flex:none}
.center{width:1336px;flex:none}
.grid{display:grid;grid-template-columns:666px 664px;grid-template-rows:376px 374px;column-gap:6px;row-gap:6px;width:1336px}
span{white-space:nowrap}`,
`<rh-titlebar></rh-titlebar>
<rh-menubar>${['File','Edit','View','Curve','Surface','SubD','Solid','Mesh','Dimension','Transform','Tools','Analyze','Render','Panels','Lands Design','Help'].map(t=>`<span>${t}</span>`).join('')}</rh-menubar>
<rh-cmd></rh-cmd>
<rh-tabs>${['Standard','CPlanes','Set View','Display','Select','Viewport Layout','Visibility','Transform','Curve Tools','Surface Tools','Solid Tools','SubD Tools','Mesh Tools','Render Tools','Drafting','New in V7'].map((t,i)=>`<rh-tab${i?'':' active'}>${t}</rh-tab>`).join('')}</rh-tabs>
<rh-toolbar>${[['new'],['open'],['save',1],['print'],['tmpl'],['cut'],['copy'],['paste'],['undo',1],['hand'],['rot'],['zoom'],['zwin'],['zext'],['zsel'],['zund',1],['four',1],['car',1],['cpl',1],['named',1],['sel',1],['bulbg',1],['lock',1],['layers',1],['wheel',1],['sphw'],['sphs',1],['sphb',1],['cone',1],['gear',1],['dim',1],['green',1],['help',1],['xbulb']].map(a=>`<rh-icon n="${a[0]}"${a[1]?' fly':''}></rh-icon>`).join('')}</rh-toolbar>
<div class="main">
<rh-sidebar>${[['arrow'],['point',1],['poly'],['freec',1,1],['circ',1],['ell',1],['arc',1],['rect',1],['hex',1],['fillet',1],['srf',1],['srf2',1],['box',1],['sph2',1],['ext',1],['srf3',1],['puzzle'],['expl'],['trim'],['split'],['bool',1],['cir3'],['crv'],['arcd',1],['tee'],['scale',1],['group'],['mirror'],['box2',1],['pull',1],['arr',1],['dots',1],['poly2',1],['check',1],['solids',1],['pyr',1]].map(a=>`<rh-icon n="${a[0]}" s="22"${a[1]?' fly':''}${a[2]?' hot':''}></rh-icon>`).join('')}</rh-sidebar>
<div class="center"><div class="grid">
<rh-viewport label="Top" active style="--ox:47.500px;--oy:20px"><svg><path d="M48 0V306" stroke="#55905e" stroke-width="2" fill="none"/><path d="M48 306.500H666" stroke="#9d4a4a" stroke-width="1.600" fill="none"/><path d="M45 294V332H82" fill="none" stroke="#565b62"/><text x="46" y="293">y</text><text x="84" y="333">x</text></svg></rh-viewport>
<rh-viewport label="Perspective" blank></rh-viewport>
<rh-viewport label="Front" style="--ox:47.500px;--oy:39px"><svg><path d="M48 0V229" stroke="#55905e" stroke-width="2" fill="none"/><path d="M48 229.500H666" stroke="#9d4a4a" stroke-width="1.600" fill="none"/><path d="M45 293V330H82" fill="none" stroke="#565b62"/><text x="47" y="295">z</text><text x="84" y="332">x</text></svg></rh-viewport>
<rh-viewport label="Right" style="--ox:21px;--oy:39px"><svg><path d="M212 0V229" stroke="#55905e" stroke-width="2" fill="none"/><path d="M212 229.500H664" stroke="#9d4a4a" stroke-width="1.600" fill="none"/><path d="M44 293V330H81" fill="none" stroke="#565b62"/><text x="46" y="295">z</text><text x="83" y="332">y</text></svg></rh-viewport>
</div>
<rh-vtabs><rh-vtab>Perspective</rh-vtab><rh-vtab active>Top</rh-vtab><rh-vtab>Front</rh-vtab><rh-vtab>Right</rh-vtab><svg width="14" height="14" viewBox="0 0 14 14" style="margin-left:11px"><path d="M5 1h4v4h4v4H9v4H5V9H1V5h4z" fill="none" stroke="#999"/></svg></rh-vtabs>
</div>
<rh-panel>
<rh-thead></rh-thead>
<rh-layer name="Default" c="#000"></rh-layer>
<rh-layer name="Text" c="#cc2a00"></rh-layer>
<rh-layer name="Curves" c="#7c3bc8" cur></rh-layer>
<rh-layer name="Surface" c="#2430e8"></rh-layer>
<rh-layer name="Solid" c="#1a6400"></rh-layer>
<rh-layer name="Dimensions" c="#fff"></rh-layer>
<rh-layer name="Plane" c="#6a6a6a" mat="Gray"></rh-layer>
<rh-layer name="Objects" c="#f03800" bulb="bulbb"></rh-layer>
</rh-panel>
</div>
<rh-snaps>${[['End',1],['Near',1],['Point',1],['Mid',1],['Cen',0],['Int',1],['Perp',1],['Tan',0],['Quad',0],['Knot',0],['Vertex',0],['Project',2],['Disable',2]].map((a,i)=>`<rh-check${a[1]==1?' on':a[1]==2?' dim':''}${i==11?' style="--m:19px"':''}>${a[0]}</rh-check>`).join('')}</rh-snaps>
<rh-status><rh-cell on>World</rh-cell><rh-cell>x -4.471</rh-cell><rh-cell>y 22.309</rh-cell><rh-cell>z 0.000</rh-cell><rh-cell>Millimeters</rh-cell><rh-cell left sw="#7c3bc8">Curves</rh-cell><rh-cell>Grid Snap</rh-cell><rh-cell>Ortho</rh-cell><rh-cell>Planar</rh-cell><rh-cell on>Osnap</rh-cell><rh-cell>SmartTrack</rh-cell><rh-cell on>Gumball</rh-cell><rh-cell>Record History</rh-cell><rh-cell>Filter</rh-cell><rh-cell left>CPU use: 0.1 %</rh-cell></rh-status>`);
</script>
</body></html>]]>
